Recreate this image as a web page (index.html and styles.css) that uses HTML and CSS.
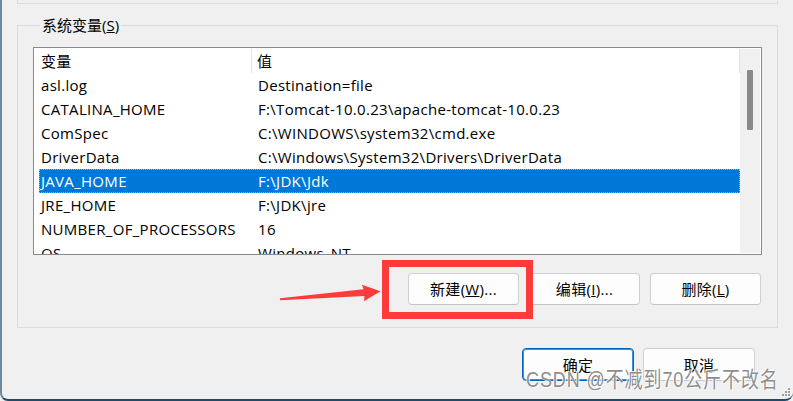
FILE: index.html
```html
<!DOCTYPE html>
<html lang="zh-CN">
<head>
<meta charset="utf-8">
<title>系统变量</title>
<link rel="stylesheet" href="styles.css">
</head>
<body>
<div class="window">
  <div class="prev-group"></div>
  <div class="group">
    <div class="legend">系统变量(<u>S</u>)</div>
    <div class="listbox">
      <div class="list">
        <div class="header">
          <div class="hcell">变量</div>
          <div class="hcell">值</div>
        </div>
        <div class="row"><span class="cell">asl.log</span><span class="cell">Destination=file</span></div>
        <div class="row"><span class="cell">CATALINA_HOME</span><span class="cell">F:\Tomcat-10.0.23\apache-tomcat-10.0.23</span></div>
        <div class="row"><span class="cell">ComSpec</span><span class="cell">C:\WINDOWS\system32\cmd.exe</span></div>
        <div class="row"><span class="cell">DriverData</span><span class="cell">C:\Windows\System32\Drivers\DriverData</span></div>
        <div class="row selected"><span class="cell">JAVA_HOME</span><span class="cell">F:\JDK\Jdk</span></div>
        <div class="row"><span class="cell">JRE_HOME</span><span class="cell">F:\JDK\jre</span></div>
        <div class="row"><span class="cell">NUMBER_OF_PROCESSORS</span><span class="cell">16</span></div>
        <div class="row"><span class="cell">OS</span><span class="cell">Windows_NT</span></div>
      </div>
      <div class="scrollbar"><div class="thumb"></div></div>
    </div>
    <div class="buttons">
      <button class="btn">新建(<u>W</u>)...</button>
      <button class="btn">编辑(<u>I</u>)...</button>
      <button class="btn">删除(<u>L</u>)</button>
    </div>
  </div>
  <div class="dialog-buttons">
    <button class="btn btn-default">确定</button>
    <button class="btn">取消</button>
  </div>

  <div class="highlight-box"></div>
  <svg class="arrow" width="793" height="401" viewBox="0 0 793 401">
    <polygon points="280,298.2 363.5,289.2 362,284.8 380.5,291.2 364,301.2 364.5,296 280,300.2" fill="#fd3b3b"/>
  </svg>
  <svg class="grip" width="10" height="10" viewBox="0 0 10 10">
    <rect x="7" y="1" width="2" height="2" fill="#a0a0a0"/>
    <rect x="4" y="4" width="2" height="2" fill="#a0a0a0"/>
    <rect x="7" y="4" width="2" height="2" fill="#a0a0a0"/>
    <rect x="1" y="7" width="2" height="2" fill="#a0a0a0"/>
    <rect x="4" y="7" width="2" height="2" fill="#a0a0a0"/>
    <rect x="7" y="7" width="2" height="2" fill="#a0a0a0"/>
  </svg>
  <div class="watermark">CSDN @不减到70公斤不改名</div>
</div>
</body>
</html>
```
FILE: styles.css
```css
html, body {
  margin: 0;
  padding: 0;
  background: #f0f0f0;
}

body {
  font-family: "Open Sans", "Noto Sans CJK SC", sans-serif;
  font-size: 15px;
  letter-spacing: 0.3px;
  color: #000;
}

.window {
  position: relative;
  width: 793px;
  height: 401px;
  box-sizing: border-box;
  background: #f0f0f0;
  border-left: 2px solid #6a8aa2;
  border-bottom: 2px solid #1f4a6c;
  border-bottom-left-radius: 8px;
  border-bottom-right-radius: 8px;
  overflow: hidden;
}

.prev-group {
  margin-left: 15px;
  width: 761px;
  height: 4px;
  box-sizing: border-box;
  border: 1px solid #dcdcdc;
  border-top: none;
}

.group {
  margin-left: 15px;
  margin-top: 21px;
  width: 761px;
  height: 303px;
  box-sizing: border-box;
  border: 1px solid #dcdcdc;
  padding: 0 15px;
}

.legend {
  width: fit-content;
  margin: -11px 0 0 7px;
  padding: 0 2px;
  height: 20px;
  line-height: 20px;
  background: #f0f0f0;
  letter-spacing: 0;
}

.listbox {
  margin-top: 12px;
  width: 729px;
  height: 208px;
  box-sizing: border-box;
  border: 1px solid #858a94;
  background: #fff;
  display: flex;
  padding: 0 1px 0 0;
}

.list {
  width: 706px;
  height: 206px;
  overflow: hidden;
}

.header {
  display: grid;
  grid-template-columns: 218px 1fr;
  height: 25px;
}

.hcell {
  margin-top: 1px;
  height: 24px;
  line-height: 24px;
  border-right: 1px solid #e5e5e5;
  padding-left: 7px;
  box-sizing: border-box;
}

.hcell + .hcell {
  padding-left: 5px;
}

.row {
  display: grid;
  grid-template-columns: 217px 1fr;
  margin-left: 5px;
  height: 24px;
  line-height: 24px;
  white-space: nowrap;
}

.cell {
  padding-left: 2px;
  overflow: hidden;
}

.row.selected {
  background: #0078d7;
  color: #fff;
  outline: 1px dotted #f0a040;
  outline-offset: -1px;
}

.scrollbar {
  width: 20px;
  margin: 1px 0;
  background: #f0f0f0;
  position: relative;
}

.thumb {
  margin: 21px 0 0 7px;
  width: 6px;
  height: 60px;
  background: #898989;
  border-radius: 1px;
}

.buttons {
  display: flex;
  justify-content: flex-end;
  gap: 10px;
  margin-top: 18px;
  margin-right: 1px;
}

.btn {
  width: 111px;
  height: 33px;
  box-sizing: border-box;
  background: #fdfdfd;
  border: 1px solid #d0d0d0;
  border-bottom-color: #c4c4c4;
  border-radius: 4px;
  font-family: "Open Sans", "Noto Sans CJK SC", sans-serif;
  font-size: 15px;
  letter-spacing: 0.3px;
  color: #000;
  padding: 0;
  line-height: 20px;
}

.buttons .btn {
  height: 32px;
}

.dialog-buttons {
  display: flex;
  justify-content: flex-end;
  gap: 9px;
  margin-top: 20px;
  margin-right: 38px;
}

.dialog-buttons .btn {
  width: 112px;
}

.btn-default {
  border: 1px solid #0067c0;
  box-shadow: inset 0 0 0 1px #3d8fd6;
}

.highlight-box {
  position: absolute;
  left: 380px;
  top: 260px;
  width: 151px;
  height: 59px;
  box-sizing: border-box;
  border: 7px solid #fd3b3b;
}

.arrow {
  position: absolute;
  left: -2px;
  top: 0;
  pointer-events: none;
}

.grip {
  position: absolute;
  left: 779px;
  top: 387px;
}

.watermark {
  position: absolute;
  left: 524px;
  top: 368px;
  font-family: "Liberation Sans", "Noto Sans CJK SC", sans-serif;
  font-size: 18px;
  letter-spacing: 0.9px;
  line-height: 20px;
  color: rgba(120, 120, 120, 0.85);
  text-shadow: 0 0 1px #fff, 1px 1px 0 rgba(255,255,255,0.8), -1px -1px 0 rgba(255,255,255,0.8);
  transform: scaleY(1.2);
  transform-origin: top left;
  white-space: nowrap;
}
```
